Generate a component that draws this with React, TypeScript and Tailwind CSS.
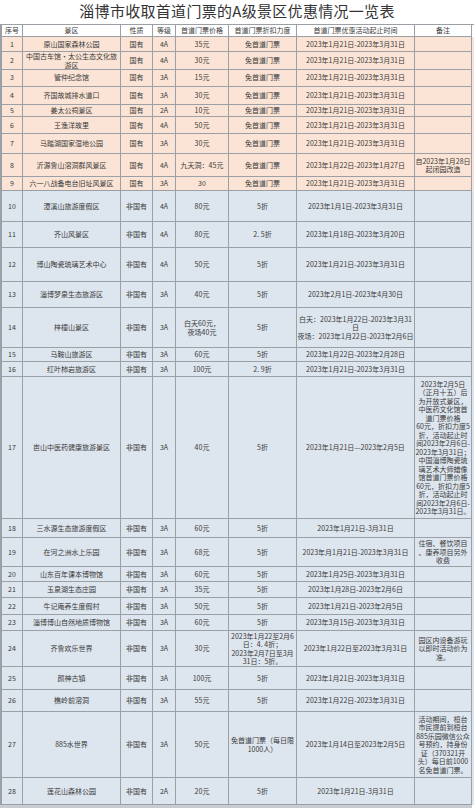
import React from "react";

type Row = {
  n: string;
  name: string[];
  type: string;
  lv: string;
  price: string[];
  disc: string[];
  time: string[];
  note: string[];
  h: string;
};

const T = "2023年1月21日-2023年3月31日";

const rows: Row[] = [
  { n: "1", name: ["原山国家森林公园"], type: "国有", lv: "4A", price: ["35元"], disc: ["免首道门票"], time: [T], note: [], h: "h-[15px]" },
  { n: "2", name: ["中国古车馆·太公生态文化旅", "游区"], type: "国有", lv: "4A", price: ["30元"], disc: ["免首道门票"], time: [T], note: [], h: "h-[16px]" },
  { n: "3", name: ["管仲纪念馆"], type: "国有", lv: "3A", price: ["15元"], disc: ["免首道门票"], time: [T], note: [], h: "h-[19px]" },
  { n: "4", name: ["齐国故城排水道口"], type: "国有", lv: "3A", price: ["30元"], disc: ["免首道门票"], time: [T], note: [], h: "h-[18px]" },
  { n: "5", name: ["姜太公祠景区"], type: "国有", lv: "2A", price: ["10元"], disc: ["免首道门票"], time: [T], note: [], h: "h-[12px]" },
  { n: "6", name: ["王渔洋故里"], type: "国有", lv: "4A", price: ["50元"], disc: ["免首道门票"], time: [T], note: [], h: "h-[17px]" },
  { n: "7", name: ["马踏湖国家湿地公园"], type: "国有", lv: "3A", price: ["30元"], disc: ["免首道门票"], time: [T], note: [], h: "h-[20px]" },
  { n: "8", name: ["沂源鲁山溶洞群风景区"], type: "国有", lv: "4A", price: ["九天洞：45元"], disc: ["免首道门票"], time: ["2023年1月22日-2023年1月27日"], note: ["自2023年1月28日", "起闭园改造"], h: "h-[23px]" },
  { n: "9", name: ["六一八战备电台旧址风景区"], type: "国有", lv: "3A", price: ["30"], disc: ["免首道门票"], time: [T], note: [], h: "h-[14px]" },
  { n: "10", name: ["潭溪山旅游度假区"], type: "非国有", lv: "4A", price: ["80元"], disc: ["5折"], time: ["2023年1月1日-2023年3月31日"], note: [], h: "h-[31px]" },
  { n: "11", name: ["齐山风景区"], type: "非国有", lv: "4A", price: ["80元"], disc: ["2. 5折"], time: ["2023年1月18日-2023年3月20日"], note: [], h: "h-[26px]" },
  { n: "12", name: ["博山陶瓷琉璃艺术中心"], type: "非国有", lv: "4A", price: ["50元"], disc: ["5折"], time: [T], note: [], h: "h-[34px]" },
  { n: "13", name: ["淄博梦泉生态旅游区"], type: "非国有", lv: "3A", price: ["40元"], disc: ["5折"], time: ["2023年2月1日-2023年4月30日"], note: [], h: "h-[26px]" },
  { n: "14", name: ["梓橦山景区"], type: "非国有", lv: "3A", price: ["白天60元，", "夜场40元"], disc: ["5折"], time: ["白天：2023年1月22日-2023年3月31", "日", "夜场：2023年1月22日-2023年2月6日"], note: [], h: "h-[40px]" },
  { n: "15", name: ["马鞍山旅游区"], type: "非国有", lv: "3A", price: ["60元"], disc: ["5折"], time: ["2023年1月22日-2023年2月28日"], note: [], h: "h-[14px]" },
  { n: "16", name: ["红叶柿岩旅游区"], type: "非国有", lv: "3A", price: ["100元"], disc: ["2. 9折"], time: [T], note: [], h: "h-[15px]" },
  {
    n: "17",
    name: ["岜山中医药健康旅游景区"],
    type: "非国有",
    lv: "3A",
    price: ["40元"],
    disc: ["5折"],
    time: ["2023年1月21日—2023年2月5日"],
    note: [
      "2023年2月5日",
      "（正月十五）后",
      "为开放式景区，",
      "中医药文化馆首",
      "道门票价格",
      "60元，折扣力度5",
      "折，活动起止时",
      "间2023年2月6日-",
      "2023年3月31日；",
      "中国淄博陶瓷琉",
      "璃艺术大师蜡像",
      "馆首道门票价格",
      "60元，折扣力度5",
      "折，活动起止时",
      "间2023年2月6日-",
      "2023年3月31日。",
    ],
    h: "h-[142px]",
  },
  { n: "18", name: ["三水源生态旅游度假区"], type: "非国有", lv: "3A", price: ["60元"], disc: ["5折"], time: ["2023年1月21日-3月31日"], note: [], h: "h-[19px]" },
  { n: "19", name: ["在河之洲水上乐园"], type: "非国有", lv: "3A", price: ["68元"], disc: ["5折"], time: ["2023年月1月21日-2023年3月31日"], note: ["住宿、餐饮项目", "、康养项目另外", "收费"], h: "h-[29px]" },
  { n: "20", name: ["山东百年课本博物馆"], type: "非国有", lv: "3A", price: ["60元"], disc: ["5折"], time: ["2023年1月25日-2023年3月31日"], note: [], h: "h-[15px]" },
  { n: "21", name: ["玉泉湖生态庄园"], type: "非国有", lv: "3A", price: ["35元"], disc: ["5折"], time: ["2023年1月28日-2023年2月6日"], note: [], h: "h-[16px]" },
  { n: "22", name: ["牛记庵养生度假村"], type: "非国有", lv: "3A", price: ["50元"], disc: ["5折"], time: ["2023年1月21日-2023年2月5日"], note: [], h: "h-[17px]" },
  { n: "23", name: ["淄博博山自然地质博物馆"], type: "非国有", lv: "3A", price: ["60元"], disc: ["5折"], time: ["2023年3月15日-2023年3月31日"], note: [], h: "h-[16px]" },
  { n: "24", name: ["齐鲁欢乐世界"], type: "非国有", lv: "3A", price: ["30元"], disc: ["2023年1月22至2月6", "日：4. 4折；", "2023年2月7日至3月", "31日：5折。"], time: ["2023年1月22日至2023年3月31日"], note: ["园区内设备游玩", "以即时活动价为", "准。"], h: "h-[36px]" },
  { n: "25", name: ["颜神古镇"], type: "非国有", lv: "3A", price: ["100元"], disc: ["5折"], time: [T], note: [], h: "h-[23px]" },
  { n: "26", name: ["樵岭前溶洞"], type: "非国有", lv: "3A", price: ["55元"], disc: ["5折"], time: ["2023年1月22日-2023年3月31日"], note: [], h: "h-[22px]" },
  {
    n: "27",
    name: ["885水世界"],
    type: "非国有",
    lv: "3A",
    price: ["50元"],
    disc: ["免首道门票（每日限", "1000人）"],
    time: ["2023年1月14日至2023年2月5日"],
    note: ["活动期间，桓台", "市民提前到桓台", "885乐园微信公众", "号预约，持身份", "证（370321开", "头）每日前1000", "名免首道门票。"],
    h: "h-[66px]",
  },
  { n: "28", name: ["莲花山森林公园"], type: "非国有", lv: "2A", price: ["20元"], disc: ["5折"], time: ["2023年1月21日-3月31日"], note: [], h: "h-[27px]" },
];

const grid =
  "grid grid-cols-[21px_98px_32px_23px_53px_68px_118px_57px] border-l-2 border-[#9aa0a6]";

function Cell({ lines }: { lines: string[] }) {
  return (
    <div className="flex flex-col items-center justify-center text-center leading-[8.5px] whitespace-nowrap border-r border-b border-[#9aa0a6]">
      {lines.map((l, i) => (
        <div key={i}>{l}</div>
      ))}
    </div>
  );
}

export default function App() {
  return (
    <div
      className="w-[474px] h-[808px] overflow-hidden bg-white text-[#3a3a3a]"
      style={{ fontFamily: '"Noto Sans CJK SC", "Noto Sans", sans-serif' }}
    >
      <div className="flex h-[24px] items-center justify-center pb-[2px] text-[15px] tracking-[0.3px] text-[#333]">
        淄博市收取首道门票的A级景区优惠情况一览表
      </div>

      <div className="text-[7px]">
        <div className={`${grid} h-[13px] border-t bg-white`}>
          <Cell lines={["序号"]} />
          <Cell lines={["景区"]} />
          <Cell lines={["性质"]} />
          <Cell lines={["等级"]} />
          <Cell lines={["首道门票价格"]} />
          <Cell lines={["首道门票折扣力度"]} />
          <Cell lines={["首道门票优惠活动起止时间"]} />
          <Cell lines={["备注"]} />
        </div>

        {rows.map((r, i) => (
          <div
            key={r.n}
            className={`${grid} ${r.h} ${i < 9 ? "bg-[#fbe4d5]" : "bg-[#dde5ee]"}`}
          >
            <Cell lines={[r.n]} />
            <Cell lines={r.name} />
            <Cell lines={[r.type]} />
            <Cell lines={[r.lv]} />
            <Cell lines={r.price} />
            <Cell lines={r.disc} />
            <Cell lines={r.time} />
            <Cell lines={r.note} />
          </div>
        ))}
        <div className="h-[3px] w-[472px] bg-[#c9cdd2]" />
      </div>
    </div>
  );
}
